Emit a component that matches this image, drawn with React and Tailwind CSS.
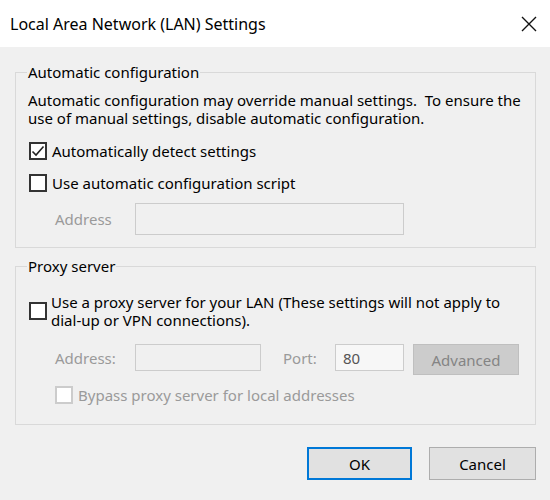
import { useState } from "react";

function Check({ checked, disabled, onChange }) {
  return (
    <button
      type="button"
      onClick={() => !disabled && onChange && onChange(!checked)}
      className={`w-[18px] h-[18px] shrink-0 flex items-center justify-center bg-white border-2 ${
        disabled ? "border-[#cccccc] bg-[#f0f0f0]" : "border-[#333333]"
      }`}
    >
      {checked && (
        <svg width="14" height="14" viewBox="0 0 14 14">
          <path d="M1.5 7.5 L5 11 L12.5 2.5" fill="none" stroke="#222" strokeWidth="1.6" />
        </svg>
      )}
    </button>
  );
}

export default function App() {
  const [autoDetect, setAutoDetect] = useState(true);
  const [useScript, setUseScript] = useState(false);
  const [useProxy, setUseProxy] = useState(false);

  return (
    <div className="w-[550px] h-[500px] flex flex-col bg-[#f0f0f0] font-['Noto_Sans',sans-serif] text-[15px] leading-[18px] text-black overflow-hidden">
      {/* title bar */}
      <div className="h-[47px] shrink-0 bg-white flex items-center justify-between pl-[10px] pr-[13px]">
        <span className="text-[16px]">Local Area Network (LAN) Settings</span>
        <svg width="16" height="16" viewBox="0 0 16 16">
          <path d="M1 1 L15 15 M15 1 L1 15" stroke="#111" strokeWidth="1.4" />
        </svg>
      </div>

      <div className="pl-[15px] w-[536px] flex flex-col">
        {/* automatic configuration */}
        <fieldset className="mt-[16px] border border-[#d9d9d9] pl-[12px] pr-[10px] pb-[12px]">
          <legend className="px-[1px] -ml-[1px]">Automatic configuration</legend>
          <p className="mt-[10px]">
            Automatic configuration may override manual settings.{"\u00a0"} To ensure the<br />
            use of manual settings, disable automatic configuration.
          </p>
          <label className="mt-[15px] flex items-center gap-[5px] pl-[1px]">
            <Check checked={autoDetect} onChange={setAutoDetect} />
            <span>Automatically detect settings</span>
          </label>
          <label className="mt-[14px] flex items-center gap-[5px] pl-[1px]">
            <Check checked={useScript} onChange={setUseScript} />
            <span>Use automatic configuration script</span>
          </label>
          <div className="mt-[11px] flex items-center pl-[27px]">
            <span className="w-[80px] text-[#9a9a9a]">Address</span>
            <div className="w-[269px] h-[32px] border border-[#cccccc] bg-[#f0f0f0]"></div>
          </div>
        </fieldset>

        {/* proxy server */}
        <fieldset className="mt-[9px] border border-[#d9d9d9] pl-[12px] pr-[10px] pb-[20px]">
          <legend className="px-[1px] -ml-[1px]">Proxy server</legend>
          <label className="mt-[18px] flex items-center gap-[4px] pl-[1px]">
            <Check checked={useProxy} onChange={setUseProxy} />
            <span>
              Use a proxy server for your LAN (These settings will not apply to<br />
              dial-up or VPN connections).
            </span>
          </label>
          <div className="mt-[15px] flex items-start pl-[27px]">
            <span className="w-[80px] h-[27px] flex items-center text-[#9a9a9a]">Address:</span>
            <div className="w-[126px] h-[27px] border border-[#cccccc] bg-[#f0f0f0]"></div>
            <span className="ml-[22px] w-[52px] h-[27px] flex items-center text-[#9a9a9a]">Port:</span>
            <div className="w-[69px] h-[27px] border border-[#cccccc] bg-[#f7f7f7] flex items-center pl-[7px] text-[#555555]">80</div>
            <div className="ml-[9px] w-[106px] h-[31px] border border-[#bfbfbf] bg-[#cccccc] flex items-center justify-center text-[#848484]">Advanced</div>
          </div>
          <div className="mt-[11px] flex items-center gap-[5px] pl-[27px]">
            <Check disabled />
            <span className="text-[#9a9a9a]">Bypass proxy server for local addresses</span>
          </div>
        </fieldset>

        {/* buttons */}
        <div className="mt-[22px] flex justify-end gap-[17px]">
          <button className="w-[105px] h-[33px] border-2 border-[#0078d7] bg-[#e1e1e1]">OK</button>
          <button className="w-[107px] h-[33px] border border-[#adadad] bg-[#e1e1e1]">Cancel</button>
        </div>
      </div>
    </div>
  );
}
